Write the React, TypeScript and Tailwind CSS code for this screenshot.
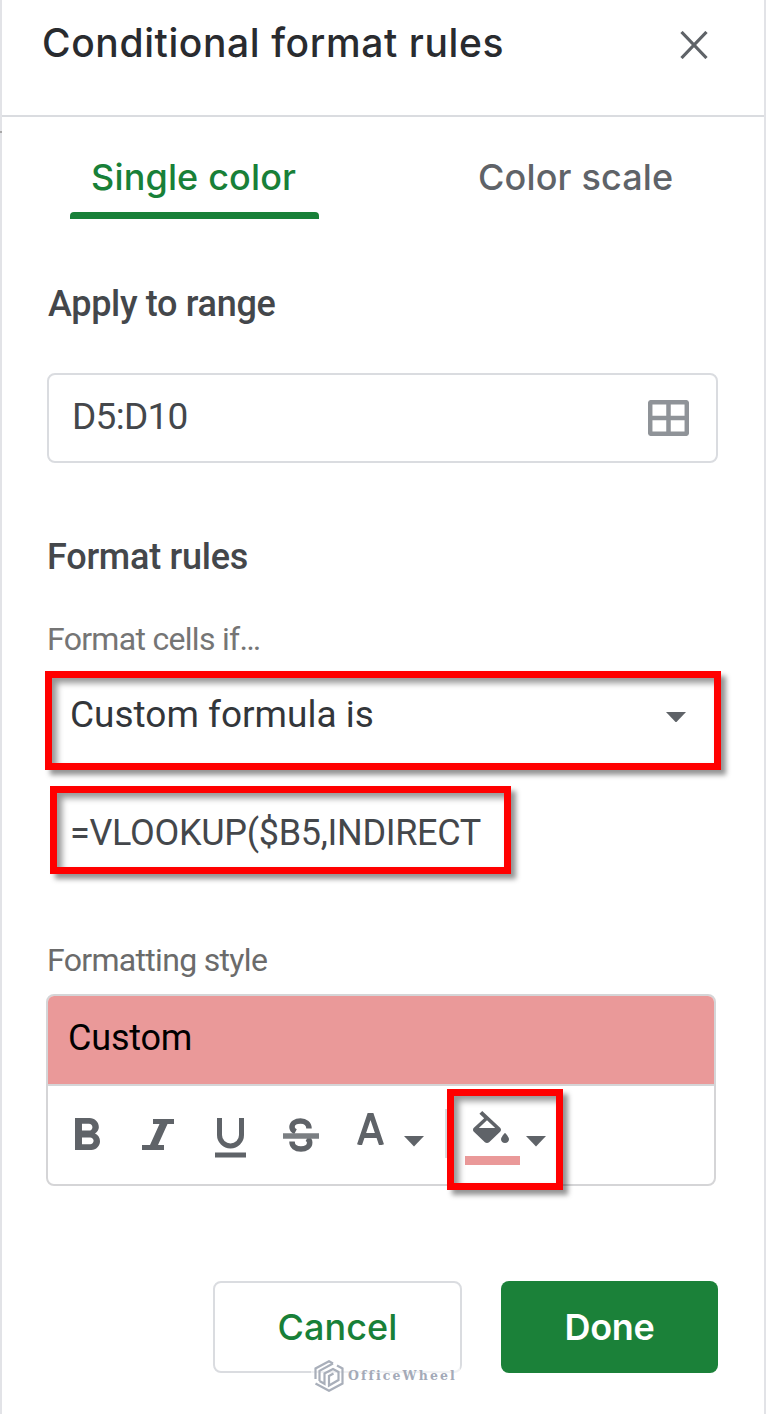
import { ReactNode } from 'react';
import { clsx } from 'clsx';

const Caret = ({ className }: { className?: string }) => (
    <svg viewBox="0 0 20 10" preserveAspectRatio="none" className={clsx("h-[10.5px] w-5 shrink-0 fill-[#5f6368]", className)}>
        <path d="M0 0h20L10 10z" />
    </svg>
);

const Highlight = ({ className, children }: { className?: string; children?: ReactNode }) => (
    <div
        className={clsx(
            "border-[7px] border-[#ff0000] shadow-[5px_5px_5px_rgba(0,0,0,0.42),inset_5px_5px_6px_rgba(0,0,0,0.42)]",
            className
        )}
    >
        {children}
    </div>
);

const Header = () => (
    <header className="flex h-[117px] items-start justify-between border-b-2 border-[#dadce0] pt-[23px] pr-[56px] pl-[40px]">
        <h1 className="font-['Inter',sans-serif] text-[39px] leading-10 font-medium tracking-[0.6px] text-[#292b2f]">
            Conditional format rules
        </h1>
        <svg viewBox="0 0 28 28" className="mt-2 h-7 w-7 stroke-[#5f6368]" strokeWidth="3.200">
            <path d="M1.500 1l25 26M26.500 1l-25 26" />
        </svg>
    </header>
);

const Tabs = () => (
    <div className="flex items-start pt-10 font-['Inter',sans-serif] text-[36px] leading-10 font-medium whitespace-nowrap">
        <div className="ml-[68px] w-[249px]">
            <div className="pl-[21px] tracking-[0.15px] text-[#188038]">Single color</div>
            <div className="mt-[15px] h-[7px] rounded-t bg-[#188038]" />
        </div>
        <div className="ml-[159px] tracking-[0.15px] text-[#5f6368]">Color scale</div>
    </div>
);

const Toolbar = () => (
    <div className="flex items-start pl-[27px] text-[#5f6368]">
        {/* bold */}
        <svg viewBox="7 4 10.75 14" preserveAspectRatio="none" className="mt-8 h-8 w-[25px]" fill="currentColor">
            <path d="M15.6 10.79c.97-.67 1.65-1.77 1.65-2.79 0-2.26-1.75-4-4-4H7v14h7.04c2.09 0 3.71-1.7 3.71-3.79 0-1.52-.86-2.82-2.15-3.42zM10 6.5h3c.83 0 1.5.67 1.5 1.5s-.67 1.5-1.5 1.5h-3v-3zm3.5 9H10v-3h3.5c.83 0 1.5.67 1.5 1.5s-.67 1.5-1.5 1.5z" />
        </svg>
        {/* italic */}
        <svg viewBox="0 0 33 31" className="mt-[33px] ml-[42px] h-[31px] w-[33px]" fill="currentColor">
            <path d="M11 0h21v5h-6.500L16 26h6v5H0v-5h8L17.500 5H11z" />
        </svg>
        {/* underline */}
        <svg viewBox="0 0 31 40" className="mt-8 ml-[40px] h-10 w-[31px]" fill="none" stroke="currentColor" strokeWidth="5">
            <path d="M4.500 0v17a11 11 0 0 0 22 0V0M0 37h31" />
        </svg>
        {/* strikethrough */}
        <svg viewBox="0 0 36 34" className="mt-8 ml-[37px] h-[34px] w-9" fill="none" stroke="currentColor" strokeWidth="5.500">
            <path d="M26 10.500C26 6 22.500 3 17.500 3S9 5.500 9 9c0 2 1 3.500 3.500 4.800" />
            <path d="M24 20.500c1.800 1 2.700 2.300 2.700 4 0 4-3.700 6.500-8.700 6.500-5.500 0-9-2.800-9-7.500" />
            <path d="M0 18h36" className="stroke-[#7b7f83]" />
        </svg>
        {/* text color */}
        <svg viewBox="0 0 27 32" className="mt-[27px] ml-[38px] h-8 w-[27px]" fill="none" stroke="currentColor" strokeWidth="5">
            <path d="M2.400 32L12.600 2h1.800L24.600 32M6 22.500h15" />
        </svg>
        <Caret className="mt-[50px] ml-5" />
        <div className="mt-[23px] ml-[21px] h-[49px] w-[2px] bg-[#dadce0]" />
        <div className="mt-[25px] ml-[18px] w-[55px]">
            <svg viewBox="3 0 18 17" preserveAspectRatio="none" className="ml-2 h-8 w-9" fill="currentColor">
                <path d="M16.560 8.940L7.620 0 6.210 1.410l2.380 2.380-5.150 5.150c-.59.59-.59 1.540 0 2.120l5.500 5.500c.29.29.68.44 1.060.44s.77-.15 1.060-.44l5.500-5.500c.59-.58.59-1.530 0-2.120zM5.900 9L10 4.900 14.100 9H5.900zM19 11.500s-2 2.170-2 3.500c0 1.100.9 2 2 2s2-.9 2-2c0-1.330-2-3.500-2-3.500z" />
            </svg>
            <div className="mt-[13px] h-[9px] bg-[#ea9999]" />
        </div>
        <Caret className="mt-[50px] ml-1.5" />
    </div>
);

const Watermark = () => (
    <div className="absolute top-[77px] left-[98px] flex h-[36px] w-[149px] items-center bg-white/60 pl-[3px]">
        <svg viewBox="0 0 30 32" className="h-8 w-[30px] shrink-0" fill="none" stroke="#a9afba" strokeWidth="2.200">
            <path d="M1.500 19V8.500L15 1.200l4 2.300M1.500 23.500L15 30.800l13.500-7.300V8.500L23 5.500" />
            <path d="M5.500 21V10.800L19 3.500M5.500 21l5 2.800V13.500L19 9l5.500 3v8L15 25.500v-9.500l4.500-2.500" />
        </svg>
        <span className="pl-1 font-['DejaVu_Serif',serif] text-[12.5px] leading-4 font-bold tracking-[2.1px] text-[#a4aab8]">
            OfficeWheel
        </span>
    </div>
);

const App = () => {
    return (
        <div className="min-h-[1414px] w-full bg-white">
            <div className="relative h-[1414px] w-[766px] border-x-2 border-[#e2e3e7] font-['Roboto',sans-serif] whitespace-nowrap">
                <div className="absolute top-[131px] -left-0.5 h-0.5 w-0.5 bg-[#a8a8a8]" />
                <Header />
                <Tabs />

                <h2 className="mt-[65px] ml-[46px] text-[36px] leading-10 font-medium tracking-[-0.32px] text-[#44474b]">
                    Apply to range
                </h2>
                <div className="mt-[49px] ml-[45px] flex h-[90px] w-[671px] items-center justify-between rounded-lg border-2 border-[#dadce0] pr-[27px] pl-[23px]">
                    <span className="pb-[3px] text-[37px] leading-10 tracking-[-0.7px] text-[#44474b]">D5:D10</span>
                    <svg viewBox="0 0 41 36" className="h-9 w-[41px]" fill="none" stroke="#8f9398" strokeWidth="4.500">
                        <rect x="2.200" y="2.200" width="36.600" height="31.600" rx="1" />
                        <path d="M20.500 2v32M2 18h37" />
                    </svg>
                </div>

                <h2 className="mt-[74px] ml-[45px] text-[36px] leading-10 font-medium tracking-[-0.25px] text-[#44474b]">
                    Format rules
                </h2>
                <div className="mt-[42px] ml-[45px] text-[32px] leading-10 tracking-[-0.7px] text-[#757575]">
                    Format cells if…
                </div>
                <Highlight className="mt-[12px] ml-[43px] flex h-[99px] w-[676px] items-center justify-between pr-[28px] pb-3 pl-[18px]">
                    <span className="text-[37px] leading-10 text-[#33363a]">Custom formula is</span>
                    <Caret className="mt-[5px]" />
                </Highlight>
                <Highlight className="mt-4 ml-12 flex h-[88px] w-[461px] items-center pt-[5px] pl-[13px]">
                    <span className="text-[36px] leading-10 tracking-[-0.3px] text-[#44474b]">=VLOOKUP($B5,INDIRECT</span>
                </Highlight>

                <div className="mt-[66px] ml-[45px] text-[32px] leading-10 tracking-[-0.68px] text-[#6b6b6b]">
                    Formatting style
                </div>
                <div className="relative mt-3.5 ml-11 h-[192px] w-[670px] rounded-lg border-2 border-[#d5d5d7]">
                    <div className="flex h-[90px] items-center rounded-t-md border-b-2 border-[#d5d5d7] bg-[#ea9999] pb-[5px] pl-5 text-[36px] leading-10 tracking-[-0.2px] text-black">
                        Custom
                    </div>
                    <Toolbar />
                    <Highlight className="absolute top-[93px] left-[399px] h-[101px] w-[116px]" />
                </div>

                <div className="relative mt-[95px] ml-[211px] flex gap-[39px] font-['Inter',sans-serif] text-[36px] leading-10">
                    <button className="h-[92px] w-[249px] rounded-lg border-2 border-[#dadce0] font-medium tracking-[0.1px] text-[#188038]">
                        Cancel
                    </button>
                    <button className="h-[92px] w-[217px] rounded-lg bg-[#1b8139] font-semibold tracking-[-0.3px] text-white">
                        Done
                    </button>
                    <Watermark />
                </div>
            </div>
        </div>
    );
};

export default App;
